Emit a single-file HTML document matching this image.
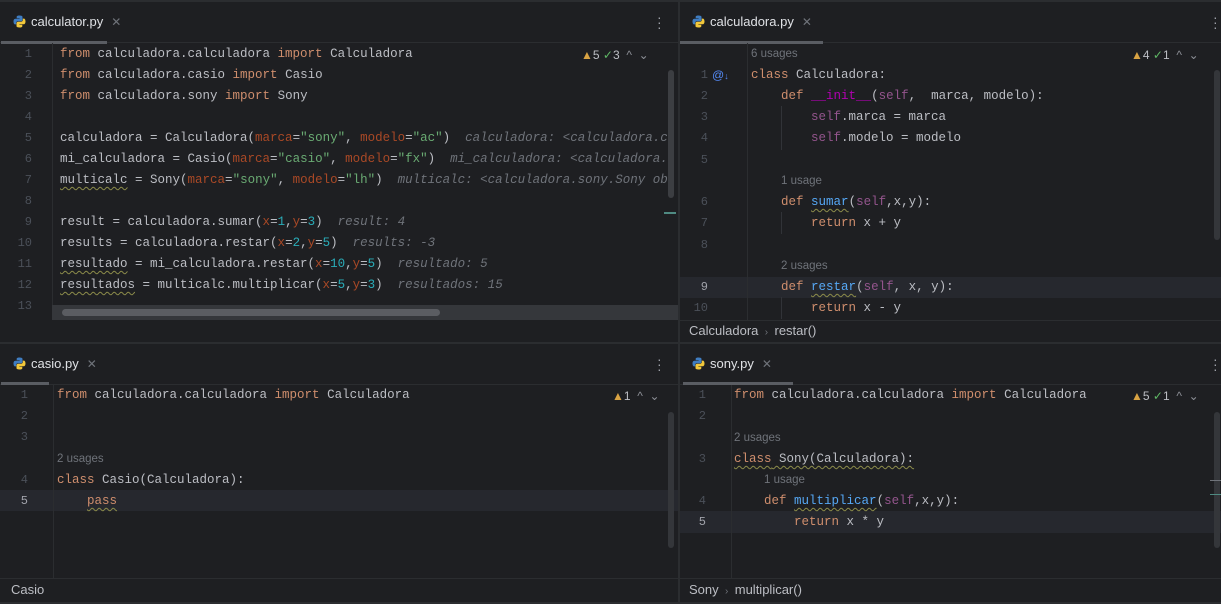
<!DOCTYPE html>
<html><head><meta charset="utf-8"><style>
*{margin:0;padding:0;box-sizing:border-box}
body{width:1221px;height:604px;background:#1e1f22;position:relative;overflow:hidden;font-family:"Liberation Mono",monospace;font-size:12.5px;color:#bcbec4}
.a{position:absolute}
.l{position:absolute;white-space:pre;line-height:16px;height:16px}
.n{position:absolute;white-space:pre;line-height:16px;color:#4b5059;font-size:12px;text-align:right;width:20px}
.u{position:absolute;font-family:"Liberation Sans",sans-serif;font-size:11.5px;color:#6f737a;line-height:16px}
.k{color:#cf8e6d}.s{color:#6aab73}.p{color:#aa4926}.d{color:#2aacb8}.h{color:#6f737a;font-style:italic}.sf{color:#94558d}.f{color:#56a8f5}.mg{color:#b200b2}
.w{text-decoration:underline wavy #8c8c4a;text-decoration-thickness:1px;text-underline-offset:3px}
.tab{position:absolute;font-family:"Liberation Sans",sans-serif;font-size:13px;color:#dfe1e5;line-height:16px}
.x{color:#6f737a;margin-left:8px;font-size:12px}
.dots{position:absolute;width:3px;color:#9da0a8;font-family:"Liberation Sans",sans-serif;font-size:14px;line-height:5px}
.bc{position:absolute;font-family:"Liberation Sans",sans-serif;font-size:13px;color:#bcbec4;line-height:16px}
.ind{position:absolute;font-family:"Liberation Sans",sans-serif;font-size:12px;line-height:16px;color:#bcbec4}
.py{display:inline-block;width:13px;height:13px;vertical-align:-2px;margin-right:5px}
</style></head><body>
<!-- separators -->
<div class="a" style="left:0;top:0;width:1221px;height:2px;background:#2b2d30"></div>
<div class="a" style="left:678px;top:0;width:2px;height:604px;background:#2b2d30"></div>
<div class="a" style="left:0;top:342px;width:1221px;height:2px;background:#2b2d30"></div>
<div class="a" style="left:0;top:42px;width:678px;height:1px;background:#2b2d30"></div>
<div class="a" style="left:680px;top:42px;width:541px;height:1px;background:#2b2d30"></div>
<div class="a" style="left:0;top:384px;width:678px;height:1px;background:#2b2d30"></div>
<div class="a" style="left:680px;top:384px;width:541px;height:1px;background:#2b2d30"></div>
<!-- tab underlines -->
<div class="a" style="left:1px;top:41px;width:106px;height:3px;background:#5a5d63"></div>
<div class="a" style="left:680px;top:41px;width:143px;height:3px;background:#5a5d63"></div>
<div class="a" style="left:1px;top:382px;width:48px;height:3px;background:#5a5d63"></div>
<div class="a" style="left:683px;top:382px;width:110px;height:3px;background:#5a5d63"></div>

<svg width="0" height="0" style="position:absolute"><defs><g id="pyi"><path d="M6.5 0.5C3.5 0.5 3.7 1.8 3.7 1.8V3.2H6.6V3.7H2.4S0.5 3.5 0.5 6.5 2.2 9.4 2.2 9.4H3.2V8S3.1 6.3 4.9 6.3H7.8S9.5 6.3 9.5 4.7V2S9.8 0.5 6.5 0.5Z" fill="#3f7cc0"/><path d="M6.5 12.5C9.5 12.5 9.3 11.2 9.3 11.2V9.8H6.4V9.3H10.6S12.5 9.5 12.5 6.5 10.8 3.6 10.8 3.6H9.8V5S9.9 6.7 8.1 6.7H5.2S3.5 6.7 3.5 8.3V11S3.2 12.5 6.5 12.5Z" fill="#f2c83b"/></g></defs></svg>

<!-- tabs -->
<div class="tab" style="left:13px;top:14px"><svg class="py" viewBox="0 0 13 13"><use href="#pyi"/></svg>calculator.py<span class="x">✕</span></div>
<div class="tab" style="left:692px;top:14px"><svg class="py" viewBox="0 0 13 13"><use href="#pyi"/></svg>calculadora.py<span class="x">✕</span></div>
<div class="tab" style="left:13px;top:356px"><svg class="py" viewBox="0 0 13 13"><use href="#pyi"/></svg>casio.py<span class="x">✕</span></div>
<div class="tab" style="left:692px;top:356px"><svg class="py" viewBox="0 0 13 13"><use href="#pyi"/></svg>sony.py<span class="x">✕</span></div>
<div class="dots" style="left:657px;top:15px">·<br>·<br>·</div>
<div class="dots" style="left:1213px;top:15px">·<br>·<br>·</div>
<div class="dots" style="left:657px;top:357px">·<br>·<br>·</div>
<div class="dots" style="left:1213px;top:357px">·<br>·<br>·</div>

<!-- ===== Pane 1 ===== -->
<div class="a" style="left:52px;top:43px;width:1px;height:262px;background:#2b2d30"></div>
<div class="n" style="left:12px;top:46px">1</div>
<div class="n" style="left:12px;top:67px">2</div>
<div class="n" style="left:12px;top:88px">3</div>
<div class="n" style="left:12px;top:109px">4</div>
<div class="n" style="left:12px;top:130px">5</div>
<div class="n" style="left:12px;top:151px">6</div>
<div class="n" style="left:12px;top:172px">7</div>
<div class="n" style="left:12px;top:193px">8</div>
<div class="n" style="left:12px;top:214px">9</div>
<div class="n" style="left:12px;top:235px">10</div>
<div class="n" style="left:12px;top:256px">11</div>
<div class="n" style="left:12px;top:277px">12</div>
<div class="n" style="left:12px;top:298px">13</div>
<div class="l" style="left:60px;top:46px"><span class="k">from</span> calculadora.calculadora <span class="k">import</span> Calculadora</div>
<div class="l" style="left:60px;top:67px"><span class="k">from</span> calculadora.casio <span class="k">import</span> Casio</div>
<div class="l" style="left:60px;top:88px"><span class="k">from</span> calculadora.sony <span class="k">import</span> Sony</div>
<div class="l" style="left:60px;top:130px">calculadora = Calculadora(<span class="p">marca</span>=<span class="s">"sony"</span>, <span class="p">modelo</span>=<span class="s">"ac"</span>)  <span class="h">calculadora: &lt;calculadora.ca</span></div>
<div class="l" style="left:60px;top:151px">mi_calculadora = Casio(<span class="p">marca</span>=<span class="s">"casio"</span>, <span class="p">modelo</span>=<span class="s">"fx"</span>)  <span class="h">mi_calculadora: &lt;calculadora.c</span></div>
<div class="l" style="left:60px;top:172px"><span class="w">multicalc</span> = Sony(<span class="p">marca</span>=<span class="s">"sony"</span>, <span class="p">modelo</span>=<span class="s">"lh"</span>)  <span class="h">multicalc: &lt;calculadora.sony.Sony ob</span></div>
<div class="l" style="left:60px;top:214px">result = calculadora.sumar(<span class="p">x</span>=<span class="d">1</span>,<span class="p">y</span>=<span class="d">3</span>)  <span class="h">result: 4</span></div>
<div class="l" style="left:60px;top:235px">results = calculadora.restar(<span class="p">x</span>=<span class="d">2</span>,<span class="p">y</span>=<span class="d">5</span>)  <span class="h">results: -3</span></div>
<div class="l" style="left:60px;top:256px"><span class="w">resultado</span> = mi_calculadora.restar(<span class="p">x</span>=<span class="d">10</span>,<span class="p">y</span>=<span class="d">5</span>)  <span class="h">resultado: 5</span></div>
<div class="l" style="left:60px;top:277px"><span class="w">resultados</span> = multicalc.multiplicar(<span class="p">x</span>=<span class="d">5</span>,<span class="p">y</span>=<span class="d">3</span>)  <span class="h">resultados: 15</span></div>
<div class="a" style="left:667px;top:44px;width:11px;height:276px;background:#1e1f22"></div>
<div class="ind" style="left:581px;top:47px"><span style="color:#d9a343">▲</span>5 <span style="color:#5fb865">✓</span>3 <span style="color:#8c8f96">&nbsp;^ &nbsp;⌄</span></div>
<div class="a" style="left:668px;top:70px;width:6px;height:128px;border-radius:3px;background:#3c3e42"></div>
<div class="a" style="left:664px;top:212px;width:12px;height:2px;background:#4f8a82"></div>
<div class="a" style="left:52px;top:305px;width:626px;height:15px;background:#35373b"></div>
<div class="a" style="left:62px;top:309px;width:378px;height:7px;border-radius:4px;background:#5b5d62"></div>

<!-- ===== Pane 2 ===== -->
<div class="a" style="left:680px;top:277px;width:541px;height:21px;background:#26282e"></div>
<div class="a" style="left:747px;top:43px;width:1px;height:277px;background:#2b2d30"></div>
<div class="u" style="left:751px;top:46px">6 usages</div>
<div class="n" style="left:688px;top:67px">1</div>
<div class="a" style="left:712px;top:68px;color:#548af7;font-family:'Liberation Sans';font-size:12px;line-height:14px">@<span style="font-size:9px">↓</span></div>
<div class="n" style="left:688px;top:88px">2</div>
<div class="n" style="left:688px;top:109px">3</div>
<div class="n" style="left:688px;top:130px">4</div>
<div class="n" style="left:688px;top:152px">5</div>
<div class="u" style="left:781px;top:173px">1 usage</div>
<div class="n" style="left:688px;top:194px">6</div>
<div class="n" style="left:688px;top:215px">7</div>
<div class="n" style="left:688px;top:237px">8</div>
<div class="u" style="left:781px;top:258px">2 usages</div>
<div class="n" style="left:688px;top:279px;color:#a1a3ab">9</div>
<div class="n" style="left:688px;top:300px">10</div>
<div class="l" style="left:751px;top:67px"><span class="k">class</span> Calculadora:</div>
<div class="l" style="left:751px;top:88px">    <span class="k">def</span> <span class="mg" style="color:#b200b2">__init__</span>(<span class="sf">self</span>,  marca, modelo):</div>
<div class="l" style="left:751px;top:109px">        <span class="sf">self</span>.marca = marca</div>
<div class="l" style="left:751px;top:130px">        <span class="sf">self</span>.modelo = modelo</div>
<div class="l" style="left:751px;top:194px">    <span class="k">def</span> <span class="f w">sumar</span>(<span class="sf">self</span>,x,y):</div>
<div class="l" style="left:751px;top:215px">        <span class="k">return</span> x + y</div>
<div class="l" style="left:751px;top:279px">    <span class="k">def</span> <span class="f w">restar</span>(<span class="sf">self</span>, x, y):</div>
<div class="l" style="left:751px;top:300px">        <span class="k">return</span> x - y</div>
<div class="a" style="left:781px;top:106px;width:1px;height:44px;background:#313338"></div>
<div class="a" style="left:781px;top:212px;width:1px;height:22px;background:#313338"></div>
<div class="a" style="left:781px;top:297px;width:1px;height:22px;background:#313338"></div>
<div class="ind" style="left:1131px;top:47px"><span style="color:#d9a343">▲</span>4 <span style="color:#5fb865">✓</span>1 <span style="color:#8c8f96">&nbsp;^ &nbsp;⌄</span></div>
<div class="a" style="left:1214px;top:70px;width:6px;height:170px;border-radius:3px;background:#34363a"></div>
<div class="a" style="left:680px;top:320px;width:541px;height:1px;background:#2b2d30"></div>
<div class="bc" style="left:689px;top:323px">Calculadora <span style="color:#6f737a;font-size:10px">&nbsp;›&nbsp;</span> restar()</div>

<!-- ===== Pane 3 ===== -->
<div class="a" style="left:0;top:490px;width:678px;height:21px;background:#26282e"></div>
<div class="a" style="left:53px;top:385px;width:1px;height:193px;background:#2b2d30"></div>
<div class="n" style="left:8px;top:387px">1</div>
<div class="n" style="left:8px;top:408px">2</div>
<div class="n" style="left:8px;top:429px">3</div>
<div class="u" style="left:57px;top:451px">2 usages</div>
<div class="n" style="left:8px;top:472px">4</div>
<div class="n" style="left:8px;top:493px;color:#a1a3ab">5</div>
<div class="l" style="left:57px;top:387px"><span class="k">from</span> calculadora.calculadora <span class="k">import</span> Calculadora</div>
<div class="l" style="left:57px;top:472px"><span class="k">class</span> Casio(Calculadora):</div>
<div class="l" style="left:57px;top:493px">    <span class="k w">pass</span></div>
<div class="ind" style="left:612px;top:388px"><span style="color:#d9a343">▲</span>1 <span style="color:#8c8f96">&nbsp;^ &nbsp;⌄</span></div>
<div class="a" style="left:668px;top:412px;width:6px;height:136px;border-radius:3px;background:#34363a"></div>
<div class="a" style="left:0;top:578px;width:678px;height:1px;background:#2b2d30"></div>
<div class="bc" style="left:11px;top:582px">Casio</div>

<!-- ===== Pane 4 ===== -->
<div class="a" style="left:680px;top:511px;width:541px;height:22px;background:#26282e"></div>
<div class="a" style="left:731px;top:385px;width:1px;height:193px;background:#2b2d30"></div>
<div class="n" style="left:686px;top:387px">1</div>
<div class="n" style="left:686px;top:408px">2</div>
<div class="u" style="left:734px;top:430px">2 usages</div>
<div class="n" style="left:686px;top:451px">3</div>
<div class="u" style="left:764px;top:472px">1 usage</div>
<div class="n" style="left:686px;top:493px">4</div>
<div class="n" style="left:686px;top:514px;color:#a1a3ab">5</div>
<div class="l" style="left:734px;top:387px"><span class="k">from</span> calculadora.calculadora <span class="k">import</span> Calculadora</div>
<div class="l" style="left:734px;top:451px"><span class="w"><span class="k">class</span> Sony(Calculadora):</span></div>
<div class="l" style="left:734px;top:493px">    <span class="k">def</span> <span class="f w">multiplicar</span>(<span class="sf">self</span>,x,y):</div>
<div class="l" style="left:734px;top:514px">        <span class="k">return</span> x * y</div>
<div class="ind" style="left:1131px;top:388px"><span style="color:#d9a343">▲</span>5 <span style="color:#5fb865">✓</span>1 <span style="color:#8c8f96">&nbsp;^ &nbsp;⌄</span></div>
<div class="a" style="left:1214px;top:412px;width:6px;height:136px;border-radius:3px;background:#34363a"></div>
<div class="a" style="left:1210px;top:480px;width:11px;height:1px;background:#6f737a"></div>
<div class="a" style="left:1210px;top:494px;width:11px;height:1px;background:#4f8a82"></div>
<div class="a" style="left:680px;top:578px;width:541px;height:1px;background:#2b2d30"></div>
<div class="bc" style="left:689px;top:582px">Sony <span style="color:#6f737a;font-size:10px">&nbsp;›&nbsp;</span> multiplicar()</div>
<div class="a" style="left:0;top:602px;width:1221px;height:2px;background:#2b2d30"></div>
</body></html>
